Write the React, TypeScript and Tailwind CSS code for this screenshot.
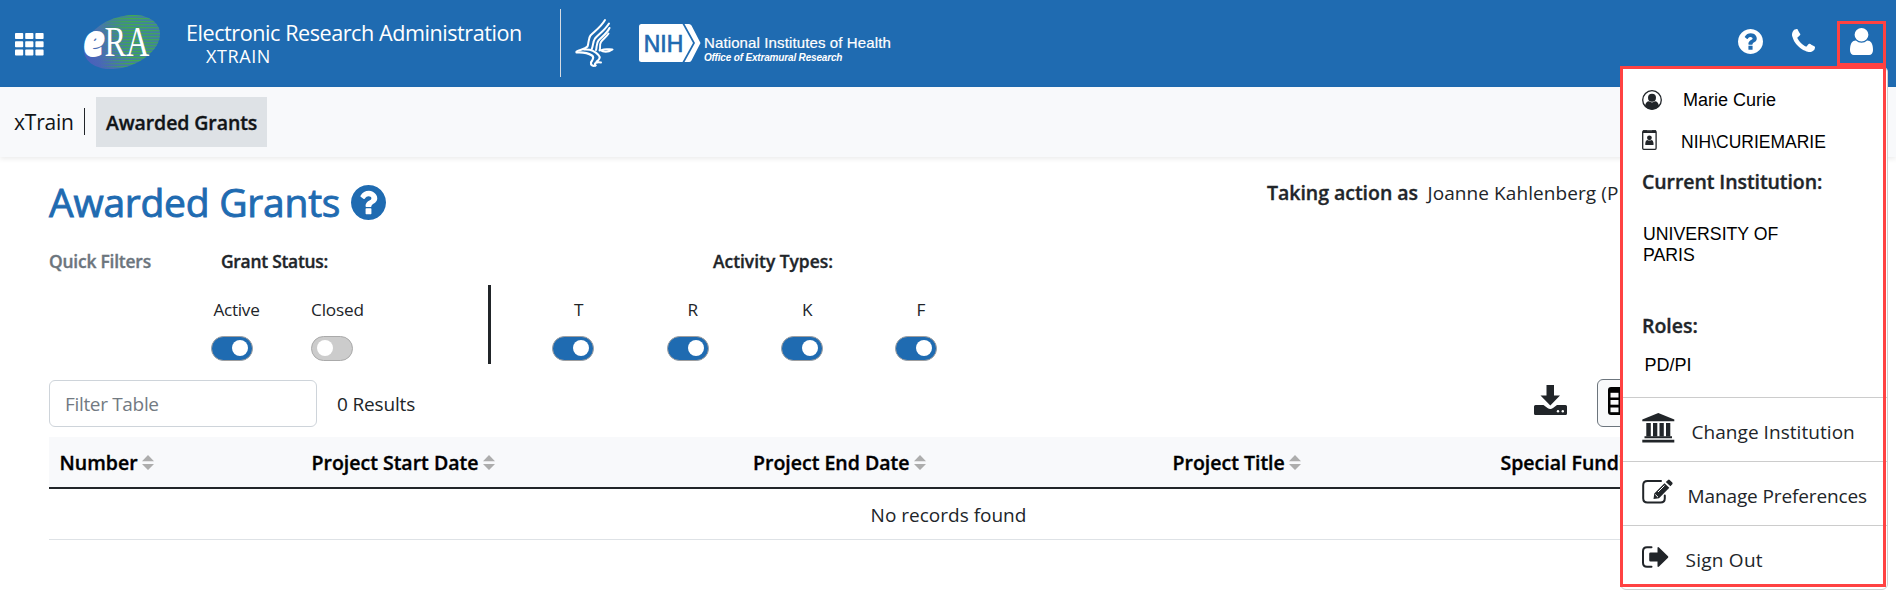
import type { ReactNode } from "react";

const PHONE =
  "M1600 1240q0 27-10 70.5t-21 68.5q-21 50-122 106-94 51-186 51-27 0-53-3.5t-57.5-12.5-47-14.5-55.5-20.5-49-18q-98-35-175-83-127-79-264-216t-216-264q-48-77-83-175-3-9-18-49t-20.5-55.5-14.5-47-12.5-57.5-3.5-53q0-92 51-186 56-101 106-122 25-11 68.5-21t70.5-10q14 0 21 3 18 6 53 76 11 19 30 54t35 63.5 31 53.5q3 4 17.5 25t21.5 35.5 7 28.5q0 20-28.5 50t-62 55-62 53-28.5 46q0 9 5 22.5t8.5 20.5 14 24 11.5 19q76 137 174 235t235 174q2 1 19 11.5t24 14 20.5 8.5 22.5 5q18 0 46-28.5t53-62 55-62 50-28.5q14 0 28.5 7t35.5 21.5 25 17.5q25 15 53.5 31t63.5 35 54 30q70 35 76 53 3 7 3 21z";
const USER =
  "M1536 1399q0 109-62.5 187t-150.5 78h-854q-88 0-150.5-78t-62.5-187q0-85 8.5-160.5t31.5-152 58.5-131 94-89 134.5-34.5q131 128 313 128t313-128q76 0 134.5 34.5t94 89 58.5 131 31.5 152 8.5 160.5zm-256-887q0 159-112.5 271.5t-271.5 112.5-271.5-112.5-112.5-271.5 112.5-271.5 271.5-112.5 271.5 112.5 112.5 271.5z";
const QUESTION =
  "M1024 1376v-192q0-14-9-23t-23-9h-192q-14 0-23 9t-9 23v192q0 14 9 23t23 9h192q14 0 23-9t9-23zm256-672q0-88-55.5-163t-138.5-116-170-41q-243 0-371 213-15 24 8 42l132 100q7 6 19 6 16 0 25-12 53-68 86-92 34-24 86-24 48 0 85.5 26t37.5 59q0 38-20 61t-68 45q-63 28-115.5 86.5t-52.5 125.5v36q0 14 9 23t23 9h192q14 0 23-9t9-23q0-19 21.5-49.5t54.5-49.5q32-18 49-28.5t46-35 44.5-48 28-60.5 12.5-81zm384 192q0 209-103 385.5t-279.5 279.5-385.5 103-385.5-103-279.5-279.5-103-385.5 103-385.5 279.5-279.5 385.5-103 385.5 103 279.5 279.5 103 385.5z";

function GridIcon() {
  return (
    <svg className="mt-[33px] ml-[15px] h-[23px] w-[29px] shrink-0" viewBox="0 0 29 23" fill="#fff">
      {[0, 8.3, 16.6].map((y) =>
        [0, 10.2, 20.4].map((x) => <rect key={`${x}-${y}`} x={x} y={y} width="8.2" height="6" rx="0.8" />),
      )}
    </svg>
  );
}

function EraLogo() {
  return (
    <svg className="mt-[14px] ml-[40px] h-[56px] w-[78px] shrink-0 overflow-visible" viewBox="0 0 78 56">
      <defs>
        <linearGradient id="era" x1="0" y1="0.8" x2="1" y2="0.3">
          <stop offset="0" stopColor="#4a5fbc" />
          <stop offset="0.35" stopColor="#4874ae" />
          <stop offset="0.65" stopColor="#43898c" />
          <stop offset="1" stopColor="#4379ac" />
        </linearGradient>
        <linearGradient id="stripe" x1="0" y1="0" x2="1" y2="0">
          <stop offset="0.2" stopColor="#3fa845" stopOpacity="0" />
          <stop offset="0.6" stopColor="#3fae49" stopOpacity="0.95" />
          <stop offset="1" stopColor="#3fa85a" stopOpacity="0.8" />
        </linearGradient>
        <clipPath id="oval">
          <ellipse cx="38" cy="28" rx="39.5" ry="25" transform="rotate(-20 38 28)" />
        </clipPath>
      </defs>
      <g clipPath="url(#oval)">
        <rect width="78" height="56" fill="url(#era)" />
        {Array.from({ length: 18 }, (_, i) => (
          <rect key={i} x="0" y={1 + i * 3} width="78" height="1.3" fill="url(#stripe)" />
        ))}
      </g>
      <g fill="#fff">
        <text transform="translate(-0.5 42.3) scale(0.86 1)" stroke="#fff" strokeWidth="1.8" fontFamily="Open Sans, sans-serif" fontWeight="800" fontStyle="italic" fontSize="42">
          e
        </text>
        <text transform="translate(20.5 41.5) scale(0.75 1)" fontFamily="Liberation Serif, serif" fontSize="43">
          RA
        </text>
      </g>
    </svg>
  );
}

function EagleLogo() {
  return (
    <svg className="mt-[18px] ml-[14px] h-[50px] w-[40px] shrink-0" viewBox="0 0 40 50" fill="none" stroke="#fff" strokeLinecap="round" strokeLinejoin="round">
      <path strokeWidth="2" d="M30 2C26 9 20 13 15.500 17.500C13 20.500 14 25 12.500 28.500C10 31.500 5 31.500 1.500 33.500" />
      <path strokeWidth="2" d="M34 5.500C30 12 24 16 20 20.500C17.500 24 18.500 28 16.500 31.500" />
      <path strokeWidth="2" d="M34.500 10C32 15.500 27 18.500 23.500 22.500C21 25.500 22 29 21 32" />
      <path strokeWidth="1.900" d="M33.500 15.500C31.500 19 28 21 26 24C24 27.500 26 29.500 24.500 32.500" />
      <path strokeWidth="2.200" d="M1.500 34.500C8 34 13 35 17 37.500C20 39.500 17 42.500 16 44.500C15.500 47 18 48.500 20.500 47.500" />
      <path strokeWidth="2" d="M9 31.500C15 31 20 33 23.500 37C26 39.500 24 42 21.500 43.500M20.500 47.500C18.500 45 21.500 44 26 44.500" />
      <path strokeWidth="2" d="M25 32C28 34 33 34.500 37.500 31.500C34 31.500 30 30.500 27 32" />
    </svg>
  );
}

function NihLogo() {
  return (
    <svg className="mt-[24px] ml-[24px] h-[38px] w-[62px] shrink-0" viewBox="0 0 62 38">
      <path fill="#fff" d="M2.500 0H43.500L54 19L43.500 38H2.500Q0 38 0 35.500V2.500Q0 0 2.500 0Z" />
      <path fill="#fff" d="M45.500 0H50Q51.500 0 52.500 1.500L61.500 19L52.500 36.500Q51.500 38 50 38H45.500L56 19Z" />
      <text x="4.800" y="27.500" fontFamily="Liberation Sans, sans-serif" fontSize="23.300" fill="#1f6bb1" stroke="#1f6bb1" strokeWidth="0.7" textLength="39.500" lengthAdjust="spacingAndGlyphs">
        NIH
      </text>
    </svg>
  );
}

function Toggle({ on = true }: { on?: boolean }) {
  return (
    <span
      className={
        on
          ? "flex h-[25px] w-[42px] items-center justify-end rounded-full border border-[#a09f9f] bg-[#1f6bb1] pr-[4px] pb-px"
          : "flex h-[25px] w-[42px] items-center justify-start rounded-full border border-[#aaa] bg-[#ccc] pb-px pl-[5px]"
      }
    >
      <span className="size-4 rounded-full bg-white" />
    </span>
  );
}

function FilterToggle({ label, on, className, labelClass }: { label: string; on?: boolean; className: string; labelClass: string }) {
  return (
    <label className={`flex flex-col ${className}`}>
      <span className={`mt-[16px] h-6 text-[17.2px] leading-6 ${labelClass}`}>{label}</span>
      <span className="mt-[14px]">
        <Toggle on={on} />
      </span>
    </label>
  );
}

function SortHeader({ children }: { children: ReactNode }) {
  return (
    <div className="flex items-center pl-[10.5px] text-[19.5px] font-semibold text-black [-webkit-text-stroke:0.35px]">
      <span className="mt-px whitespace-nowrap">{children}</span>
      <svg className="ml-[4.5px] h-[15px] w-[12px] shrink-0" viewBox="0 0 12 15" fill="#adadad">
        <path d="M6 0L12 6.300H0ZM6 15L0 8.900H12Z" />
      </svg>
    </div>
  );
}

function DownloadIcon() {
  return (
    <svg className="h-[30px] w-[33px]" viewBox="0 0 33 30">
      <path fill="#212529" d="M12.500 0H20V10.500H26L16.300 20.500L6.500 10.500H12.500Z" />
      <path fill="#212529" d="M1.500 20H9.500L13.500 23Q16.300 25 19 23L23 20H31.500Q33 20 33 21.500V28.500Q33 30 31.500 30H1.500Q0 30 0 28.500V21.500Q0 20 1.500 20Z" />
      <circle cx="24" cy="26.300" r="1.200" fill="#fff" />
      <circle cx="28.800" cy="26.300" r="1.200" fill="#fff" />
    </svg>
  );
}

function TableIcon() {
  return (
    <svg className="h-[28px] w-[32px]" viewBox="0 0 32 28">
      <rect width="32" height="28" rx="3" fill="#000" />
      {[5.800, 13, 20.500].map((y) =>
        [2.500, 17].map((x) => <rect key={`${x}-${y}`} x={x} y={y} width="8" height="4.700" fill="#f8f9fa" />),
      )}
    </svg>
  );
}

function ProfileIcon() {
  return (
    <svg className="h-5 w-5" viewBox="0 0 20 20">
      <circle cx="10" cy="10" r="9.300" fill="none" stroke="#212529" strokeWidth="1.300" />
      <circle cx="10" cy="7.800" r="4" fill="#212529" />
      <path fill="#212529" d="M3 16C3.500 12.800 5 11.500 7 11.300Q10 13.500 13 11.300C15 11.500 16.500 12.800 17 16Q14 19.500 10 19.500T3 16Z" />
    </svg>
  );
}

function BadgeIcon() {
  return (
    <svg className="h-5 w-[15px]" viewBox="0 0 15 20">
      <rect x="0.700" y="1" width="13.400" height="18.300" rx="1" fill="none" stroke="#212529" strokeWidth="1.300" />
      <path fill="#212529" d="M1 0.300H5V1.200H10V0.300H14V3H1Z" />
      <circle cx="7.400" cy="7.800" r="2.400" fill="#212529" />
      <path fill="#212529" d="M3.300 15V13Q3.500 10.200 5.500 10Q7.400 11.200 9.300 10Q11.300 10.200 11.500 13V15Z" />
    </svg>
  );
}

function BankIcon() {
  return (
    <svg className="h-[30px] w-[33px]" viewBox="0 0 33 30" fill="#212529">
      <path d="M16.300 0L32.300 6.500V8.300H0.300V6.500Z" />
      <path d="M4.300 10H8.800V23.500H4.300ZM11 10H15.300V23.500H11ZM17.500 10H21.800V23.500H17.500ZM24 10H28.300V23.500H24Z" />
      <path d="M2.500 23.300H30V25.200H2.500ZM0.300 26.700H32.300V29.500H0.300Z" />
    </svg>
  );
}

function EditIcon() {
  return (
    <svg className="h-[25px] w-[31px]" viewBox="0 0 31 25">
      <path fill="none" stroke="#212529" strokeWidth="2" strokeLinecap="round" d="M19 2H5.500Q1.200 2 1.200 6.200V19.300Q1.200 23.500 5.500 23.500H18.500Q22.800 23.500 22.800 19.300V16.500" />
      <path fill="#212529" d="M11.500 20L12.300 14.500L22.500 4.200L27.300 8.800L17 19.200ZM23.800 3L26 0.900Q26.900 0.200 27.700 0.900L30.300 3.600Q31 4.400 30.300 5.200L28.400 7.300Z" />
      <path fill="none" stroke="#fff" strokeWidth="1" d="M13.300 15.500L16 18.200M16 13L22.500 6.500" />
    </svg>
  );
}

function SignOutIcon() {
  return (
    <svg className="h-[22px] w-[27px]" viewBox="0 0 27 22">
      <path fill="none" stroke="#212529" strokeWidth="2" strokeLinecap="round" d="M9.500 1.300H5Q1 1.300 1 5.300V16.700Q1 20.700 5 20.700H9.500" />
      <path fill="#212529" d="M15.500 1.500Q16 0.700 17 1.500L26 10.300Q26.700 11 26 11.700L17 20.500Q16 21.300 15.500 20.500V15.500H8.500Q7.200 15.500 7.200 14.200V7.700Q7.200 6.500 8.500 6.500H15.500Z" />
    </svg>
  );
}

function TopBar() {
  return (
    <header className="flex h-[87px] items-start bg-[#1f6bb1] text-white">
      <GridIcon />
      <EraLogo />
      <div className="mt-[16.5px] ml-[24px] w-[374px] shrink-0 whitespace-nowrap">
        <div className="h-8 text-[21.6px] leading-8 tracking-[-0.45px]">Electronic Research Administration</div>
        <div className="-mt-[4.5px] ml-[20px] h-6 text-[18px] leading-6 tracking-[0.6px]">XTRAIN</div>
      </div>
      <div className="mt-[9px] h-[68px] w-px shrink-0 bg-[#d5dbe3]" />
      <EagleLogo />
      <NihLogo />
      <div className="mt-[34px] ml-[3px] font-['Liberation_Sans',sans-serif] whitespace-nowrap">
        <div className="text-[15px] leading-[18px] tracking-[0.12px] [-webkit-text-stroke:0.2px]">National Institutes of Health</div>
        <div className="text-[10px] leading-[12px] font-bold tracking-[-0.17px] italic">Office of Extramural Research</div>
      </div>
      <div className="mr-[10px] ml-auto flex items-start">
        <svg className="mt-[28.5px] mr-[29px] size-[25px]" viewBox="128 128 1536 1536" fill="#fff">
          <path d={QUESTION} />
        </svg>
        <svg className="mt-[29px] mr-[22px] size-[23px]" viewBox="192 128 1408 1408" fill="#fff">
          <path d={PHONE} />
        </svg>
        <div className="mt-[21px] flex h-[45px] w-[49px] justify-center border-3 border-[#ff4242]">
          <svg className="mt-[4px] h-[27px] w-[23px]" viewBox="256 128 1280 1536" fill="#fff" preserveAspectRatio="none">
            <path d={USER} />
          </svg>
        </div>
      </div>
    </header>
  );
}

function MenuRow({ icon, label, className }: { icon: ReactNode; label: string; className: string }) {
  return (
    <div className="flex h-16 items-start border-t border-[#ccc] pl-[20px]">
      {icon}
      <span className={`h-7 text-[19px] leading-7 whitespace-nowrap ${className}`}>{label}</span>
    </div>
  );
}

function UserMenu() {
  return (
    <div className="absolute top-[66px] left-[1620px] h-[524px] w-[268px]">
      <div className="h-[524px] rounded-md border border-[#d0d0d0] bg-white pt-[23px] pl-px text-[#212529]">
        <div className="flex h-5 items-center pl-[20px]">
          <ProfileIcon />
          <span className="ml-[21px] font-['Liberation_Sans',sans-serif] text-[18px] leading-5 text-black">Marie Curie</span>
        </div>
        <div className="mt-[20px] flex h-5 items-center pl-[20px]">
          <BadgeIcon />
          <span className="mt-[3px] ml-[24px] font-['Liberation_Sans',sans-serif] text-[17.5px] leading-5 text-black">NIH\CURIEMARIE</span>
        </div>
        <div className="mt-[18px] pl-[20px] text-[19.5px] leading-7 font-semibold tracking-[-0.08px] [-webkit-text-stroke:0.35px]">Current Institution:</div>
        <div className="mt-[28px] w-[180px] pl-[21px] font-['Liberation_Sans',sans-serif] text-[17.7px] leading-[21px] text-black">
          UNIVERSITY OF
          <br />
          PARIS
        </div>
        <div className="mt-[46px] pl-[20px] text-[19.5px] leading-7 font-semibold [-webkit-text-stroke:0.35px]">Roles:</div>
        <div className="mt-[13px] pl-[22.5px] font-['Liberation_Sans',sans-serif] text-[18px] leading-6 text-black">PD/PI</div>
        <div className="mt-[20px]">
          <MenuRow icon={<span className="mt-[15px]"><BankIcon /></span>} label="Change Institution" className="mt-[20px] ml-[16.5px] tracking-[0.05px]" />
          <MenuRow icon={<span className="mt-[17px]"><EditIcon /></span>} label="Manage Preferences" className="mt-[20px] ml-[14.5px] tracking-[-0.12px]" />
          <MenuRow icon={<span className="mt-[20px]"><SignOutIcon /></span>} label="Sign Out" className="mt-[20px] ml-[16.5px] tracking-[0.25px]" />
        </div>
      </div>
      <div className="absolute top-0 left-0 h-[521px] w-[266px] border-3 border-[#ff4242]" />
    </div>
  );
}

export default function App() {
  return (
    <div className="relative h-[594px] w-[1896px] overflow-hidden bg-white font-['Open_Sans',sans-serif] text-[#212529]">
      <TopBar />
      <nav className="flex h-[70px] items-start bg-[#f8f9fb] text-[#111417] shadow-[0_2px_5px_rgba(0,0,0,0.08)]">
        <span className="mt-[19px] ml-[14px] w-[70px] text-[21px] leading-8 tracking-[-0.2px]">xTrain</span>
        <span className="mt-[21px] h-[27px] w-px bg-[#212529]" />
        <span className="mt-[10px] ml-[11px] h-[50px] w-[171px] bg-[#dee2e6] pl-[10px] text-[19.5px] leading-[52px] font-semibold tracking-[-0.1px] whitespace-nowrap [-webkit-text-stroke:0.35px]">
          Awarded Grants
        </span>
      </nav>

      <main className="pl-[49px]">
        <div className="flex h-[72px] items-start">
          <h1 className="mt-[19px] w-[302px] text-[39px] leading-[52px] font-medium tracking-[-0.25px] whitespace-nowrap text-[#1f6bb1] [-webkit-text-stroke:0.9px]">
            Awarded Grants
          </h1>
          <svg className="mt-[28px] size-[35px]" viewBox="128 128 1536 1536" fill="#1f6bb1">
            <path d={QUESTION} />
          </svg>
          <div className="mt-[22px] ml-[881px] flex whitespace-nowrap">
            <span className="w-[160.5px] text-[19.5px] leading-7 font-semibold tracking-[-0.03px] [-webkit-text-stroke:0.35px]">Taking action as</span>
            <span className="text-[19px] leading-7 tracking-[0.08px]">Joanne Kahlenberg (PI)</span>
          </div>
        </div>

        <section className="flex h-[151px]">
          <div className="w-[162px] pt-[20px] text-[17.4px] leading-6 font-semibold tracking-[-0.2px] text-[#6c757d] [-webkit-text-stroke:0.35px]">Quick Filters</div>
          <div className="w-[277px] pt-[20px]">
            <h2 className="ml-[10px] text-[17.4px] leading-6 font-semibold tracking-[-0.25px] [-webkit-text-stroke:0.35px]">Grant Status:</h2>
            <div className="mt-[9px] flex">
              <FilterToggle label="Active" className="w-[100px]" labelClass="ml-[2.5px] tracking-[-0.3px]" />
              <FilterToggle label="Closed" on={false} className="w-[100px]" labelClass="tracking-[-0.15px]" />
            </div>
          </div>
          <div className="mt-[56px] h-[79px] w-[3px] bg-[#212529]" />
          <div className="ml-[61px] pt-[20px]">
            <h2 className="ml-[161px] text-[17.4px] leading-6 font-semibold [-webkit-text-stroke:0.35px]">Activity Types:</h2>
            <div className="mt-[9px] flex">
              <FilterToggle label="T" className="w-[115px]" labelClass="ml-[22px]" />
              <FilterToggle label="R" className="w-[114px]" labelClass="ml-[20.5px]" />
              <FilterToggle label="K" className="w-[114px]" labelClass="ml-[21px]" />
              <FilterToggle label="F" className="w-[114px]" labelClass="ml-[21.5px]" />
            </div>
          </div>
        </section>

        <div className="flex h-[57px] items-start">
          <input
            placeholder="Filter Table"
            className="h-[47px] w-[268px] rounded-md border border-[#ced4da] bg-white pl-[15px] text-[19px] tracking-[-0.33px] placeholder:text-[#727a82]"
          />
          <span className="mt-[10px] ml-[20px] w-[190px] text-[19px] leading-7 tracking-[-0.16px]">0 Results</span>
          <div className="mt-[5px] ml-[1007px]">
            <DownloadIcon />
          </div>
          <div className="-mt-px ml-[30px] flex h-12 w-[54px] items-start rounded-md border border-[#6c757d] bg-[#f8f9fa] pt-[7px] pl-[10px]">
            <TableIcon />
          </div>
        </div>

        <div className="w-[1799px]">
          <div className="grid h-[52px] grid-cols-[252px_441.5px_419.5px_328px_1fr] border-b-2 border-[#212529] bg-[#f8f9fb]">
            <SortHeader>Number</SortHeader>
            <SortHeader>Project Start Date</SortHeader>
            <SortHeader>Project End Date</SortHeader>
            <SortHeader>Project Title</SortHeader>
            <SortHeader>Special Funding</SortHeader>
          </div>
          <div className="h-[51px] border-b border-[#dee2e6] text-center text-[19px] leading-[52px]">No records found</div>
        </div>
      </main>
      <UserMenu />
    </div>
  );
}
